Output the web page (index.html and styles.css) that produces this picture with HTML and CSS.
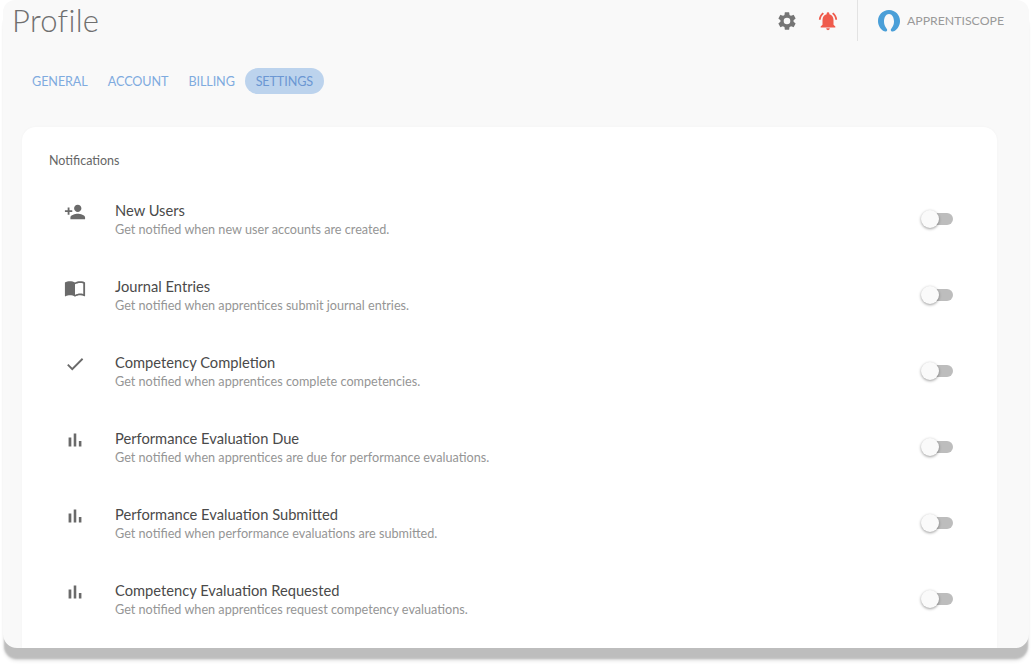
FILE: index.html
```html
<!DOCTYPE html>
<html lang="en">
<head>
<meta charset="utf-8">
<title>Profile</title>
<link rel="stylesheet" href="styles.css">
</head>
<body>
<div class="window">
  <header class="topbar">
    <h1 class="title">Profile</h1>
    <div class="actions">
      <svg class="icon-gear" viewBox="0 0 24 24"><path d="M19.14 12.94c.04-.3.06-.61.06-.94 0-.32-.02-.64-.07-.94l2.03-1.58a.49.49 0 0 0 .12-.61l-1.92-3.32a.49.49 0 0 0-.59-.22l-2.39.96c-.5-.38-1.03-.7-1.62-.94l-.36-2.54a.48.48 0 0 0-.48-.41h-3.84c-.24 0-.43.17-.47.41l-.36 2.54c-.59.24-1.13.57-1.62.94l-2.39-.96a.49.49 0 0 0-.59.22L2.74 8.87c-.12.21-.08.47.12.61l2.03 1.58c-.05.3-.09.63-.09.94s.02.64.07.94l-2.03 1.58a.49.49 0 0 0-.12.61l1.92 3.32c.12.22.37.29.59.22l2.39-.96c.5.38 1.03.7 1.62.94l.36 2.54c.05.24.24.41.48.41h3.84c.24 0 .44-.17.47-.41l.36-2.54c.59-.24 1.13-.56 1.62-.94l2.39.96c.22.08.47 0 .59-.22l1.92-3.32c.12-.22.07-.47-.12-.61l-2.01-1.58zM12 15.6A3.6 3.6 0 1 1 12 8.4a3.6 3.6 0 0 1 0 7.2z"/></svg>
      <svg class="icon-bell" viewBox="0 0 24 24"><path d="M7.58 4.08 6.15 2.65C3.75 4.48 2.17 7.3 2.03 10.5h2c.15-2.65 1.51-4.97 3.55-6.42zM19.97 10.5h2c-.15-3.2-1.73-6.02-4.12-7.85l-1.42 1.43c2.02 1.45 3.39 3.77 3.54 6.42zM18 11c0-3.07-1.64-5.64-4.5-6.32V4a1.5 1.5 0 0 0-3 0v.68C7.63 5.36 6 7.92 6 11v5l-2 2v1h16v-1l-2-2v-5zM12 22a2 2 0 0 0 2-2h-4a2 2 0 0 0 2 2z"/></svg>
      <div class="divider"></div>
      <div class="account">
        <svg class="logo" viewBox="0 0 24 24"><path d="M12 1C5.500 1 1 6 1 12c0 4.500 2.500 8 5.500 10 1.600 1 3.700.4 3.700-1.100 0-1.400-3.200-3.400-3.200-8.400C7 8.500 9 5 12 5s5 3.500 5 7.500c0 5-3.200 7-3.200 8.400 0 1.500 2.100 2.100 3.700 1.100 3-2 5.500-5.500 5.500-10C23 6 18.500 1 12 1z"/></svg>
        <span class="account-name">APPRENTISCOPE</span>
      </div>
    </div>
  </header>

  <nav class="tabs">
    <a class="tab">GENERAL</a>
    <a class="tab">ACCOUNT</a>
    <a class="tab">BILLING</a>
    <a class="tab active">SETTINGS</a>
  </nav>

  <section class="card">
    <h2 class="card-title">Notifications</h2>

    <div class="row">
      <svg class="row-icon" viewBox="0 0 24 24"><path d="M15 12c2.210 0 4-1.790 4-4s-1.790-4-4-4-4 1.790-4 4 1.790 4 4 4zm-9-2V7H4v3H1v2h3v3h2v-3h3v-2H6zm9 4c-2.670 0-8 1.340-8 4v2h16v-2c0-2.660-5.330-4-8-4z"/></svg>
      <div class="row-text"><div class="row-title">New Users</div><div class="row-desc">Get notified when new user accounts are created.</div></div>
      <div class="toggle"><span class="knob"></span></div>
    </div>

    <div class="row">
      <svg class="row-icon" viewBox="0 0 24 24"><path d="M21 5c-1.110-.350-2.330-.5-3.500-.5-1.950 0-4.050.4-5.500 1.500-1.450-1.100-3.550-1.500-5.500-1.500S2.450 4.900 1 6v14.650c0 .25.250.5.500.5.100 0 .150-.05.250-.05C3.100 20.450 5.050 20 6.500 20c1.950 0 4.050.4 5.500 1.500 1.350-.85 3.800-1.500 5.500-1.500 1.650 0 3.350.3 4.750 1.050.1.050.150.050.25.050.25 0 .5-.25.5-.5V6c-.6-.45-1.250-.75-2-1zm0 13.500c-1.100-.35-2.300-.5-3.500-.5-1.700 0-4.150.65-5.500 1.500V8c1.350-.85 3.800-1.500 5.500-1.500 1.200 0 2.400.15 3.500.5v11.500z"/></svg>
      <div class="row-text"><div class="row-title">Journal Entries</div><div class="row-desc">Get notified when apprentices submit journal entries.</div></div>
      <div class="toggle"><span class="knob"></span></div>
    </div>

    <div class="row">
      <svg class="row-icon" viewBox="0 0 24 24"><path d="M9 16.170 4.830 12l-1.420 1.410L9 19 21 7l-1.410-1.410z"/></svg>
      <div class="row-text"><div class="row-title">Competency Completion</div><div class="row-desc">Get notified when apprentices complete competencies.</div></div>
      <div class="toggle"><span class="knob"></span></div>
    </div>

    <div class="row">
      <svg class="row-icon" viewBox="0 0 24 24"><path d="M5 9.200h3V19H5zM10.600 5h2.800v14h-2.800zm5.600 8H19v6h-2.800z"/></svg>
      <div class="row-text"><div class="row-title">Performance Evaluation Due</div><div class="row-desc">Get notified when apprentices are due for performance evaluations.</div></div>
      <div class="toggle"><span class="knob"></span></div>
    </div>

    <div class="row">
      <svg class="row-icon" viewBox="0 0 24 24"><path d="M5 9.200h3V19H5zM10.600 5h2.800v14h-2.800zm5.600 8H19v6h-2.800z"/></svg>
      <div class="row-text"><div class="row-title">Performance Evaluation Submitted</div><div class="row-desc">Get notified when performance evaluations are submitted.</div></div>
      <div class="toggle"><span class="knob"></span></div>
    </div>

    <div class="row">
      <svg class="row-icon" viewBox="0 0 24 24"><path d="M5 9.200h3V19H5zM10.600 5h2.800v14h-2.800zm5.600 8H19v6h-2.800z"/></svg>
      <div class="row-text"><div class="row-title">Competency Evaluation Requested</div><div class="row-desc">Get notified when apprentices request competency evaluations.</div></div>
      <div class="toggle"><span class="knob"></span></div>
    </div>
  </section>
</div>
</body>
</html>
```

FILE: styles.css
```css
* { box-sizing: border-box; }
html, body { margin: 0; height: 100%; background: #fff; overflow: hidden; }
body { font-family: "Lato", "Open Sans", sans-serif; padding: 0 3px; }

.window {
  height: 648px;
  background: #f9f9f9;
  border-radius: 12px 12px 14px 14px;
  box-shadow: 0 12px 2px -1px #bdbdbd, 0 14px 4px -2px #d8d8d8;
  overflow: hidden;
  display: flex;
  flex-direction: column;
}

.topbar { height: 41px; display: flex; justify-content: space-between; padding-left: 9px; flex: none; }
.title { margin: 0; font-size: 31px; font-weight: 300; line-height: 40px; color: #6f6f6f; letter-spacing: .3px; }

.actions { display: flex; align-items: flex-start; }
.icon-gear { width: 22px; height: 22px; margin-top: 10px; fill: #757575; }
.icon-bell { width: 22px; height: 22px; margin: 10px 0 0 19.500px; fill: #ef5b4c; }
.divider { width: 1px; height: 41px; background: #e3e3e3; margin-left: 17.500px; }
.account { display: flex; align-items: center; height: 41px; margin-left: 19px; padding-right: 25px; }
.logo { width: 24px; height: 24px; fill: #4a9fd8; }
.account-name { font-size: 12.300px; color: #9a9a9a; margin-left: 6px; }

.tabs { display: flex; align-items: center; height: 26px; margin-top: 27px; padding-left: 19px; flex: none; }
.tab { font-size: 12.600px; letter-spacing: -.1px; color: #7fabdf; padding: 0 10.100px; line-height: 27px; height: 26px; white-space: nowrap; }
.tab.active { background: #bcd3ed; color: #6b97d3; border-radius: 13px; padding: 0 10.800px; }

.card {
  flex: 1;
  margin: 33px 32px 0 19px;
  background: #fff;
  border-radius: 14px 14px 0 0;
  padding: 26px 27px 0;
  box-shadow: 0 0 3px rgba(0,0,0,.03);
}
.card-title { margin: 0; font-size: 12.500px; font-weight: 400; line-height: 15px; color: #666; }

.row { display: flex; height: 76px; align-items: flex-start; padding-top: 17px; }
.card-title + .row { margin-top: 13px; }
.row-icon { width: 22px; height: 22px; margin: 3px 0 0 15px; fill: #6a6a6a; flex: none; }
.row-text { flex: 1; margin-left: 29px; }
.row-title { font-size: 14.700px; line-height: 19px; color: #4a4a4a; margin-top: 3px; }
.row-desc { font-size: 12.650px; line-height: 19px; color: #959595; }

.toggle { position: relative; width: 28px; height: 12px; margin: 15px 17px 0 0; background: #bdbdbd; border-radius: 6px; flex: none; }
.knob { position: absolute; left: -4px; top: -3px; width: 18px; height: 18px; border-radius: 50%; background: #fafafa; box-shadow: 0 1px 3px rgba(0,0,0,.4); }
```
